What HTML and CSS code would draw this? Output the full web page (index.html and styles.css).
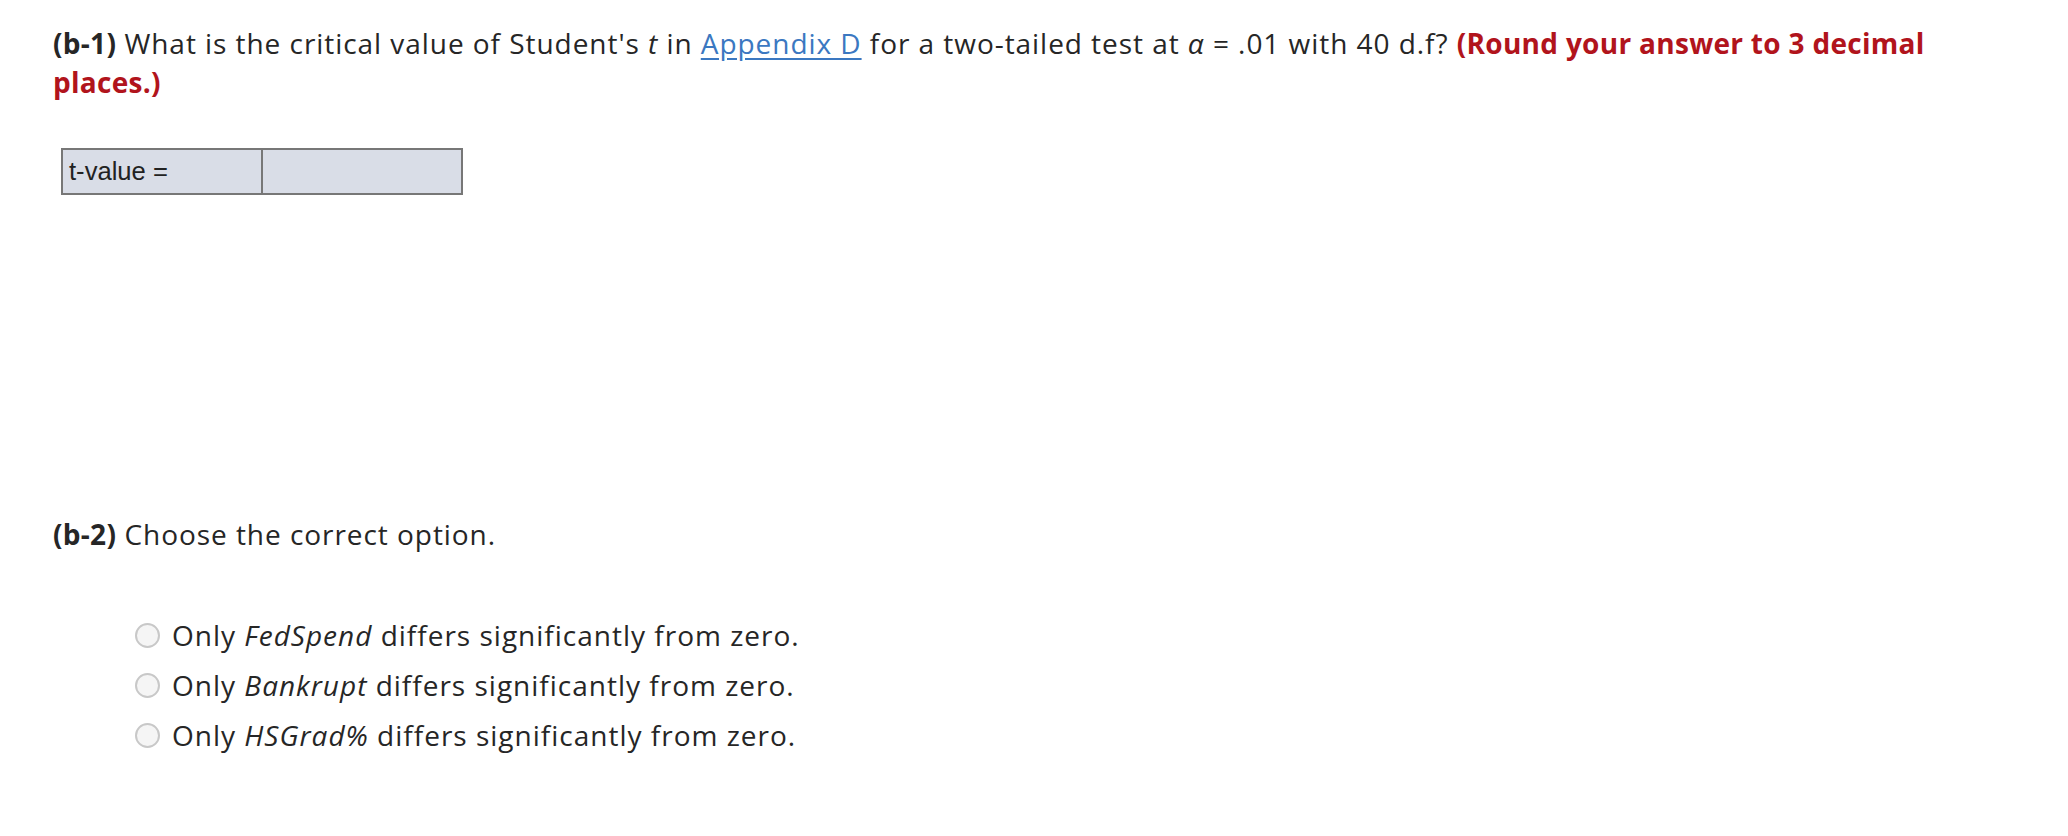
FILE: index.html
```html
<!DOCTYPE html>
<html lang="en">
<head>
<meta charset="utf-8">
<title>Question</title>
<link rel="stylesheet" href="styles.css">
</head>
<body>
<main class="page">
  <p class="question"><strong>(b-1)</strong> What is the critical value of Student's <em>t</em> in <a class="link" href="#">Appendix D</a> for a two-tailed test at <em>α</em> = .01 with 40 d.f? <strong class="hint">(Round your answer to 3 decimal</strong><br><strong class="hint">places.)</strong></p>

  <table class="answer">
    <tr>
      <td class="label">t-value =</td>
      <td class="input"></td>
    </tr>
  </table>

  <p class="question q2"><strong>(b-2)</strong> Choose the correct option.</p>

  <ul class="options">
    <li class="option"><span class="radio"></span><span>Only <em>FedSpend</em> differs significantly from zero.</span></li>
    <li class="option"><span class="radio"></span><span>Only <em>Bankrupt</em> differs significantly from zero.</span></li>
    <li class="option"><span class="radio"></span><span>Only <em>HSGrad%</em> differs significantly from zero.</span></li>
  </ul>
</main>
</body>
</html>
```

FILE: styles.css
```css
html, body {
  margin: 0;
  padding: 0;
  background: #ffffff;
}

.page {
  padding: 24px 0 0 53px;
  width: 1900px;
  font-family: "Open Sans", "Lato", sans-serif;
  color: #262626;
}

.question {
  margin: 0;
  font-size: 28px;
  line-height: 39px;
  letter-spacing: 0.95px;
}

.question strong {
  font-weight: 700;
  letter-spacing: 0.3px;
}

.hint {
  color: #b1141c;
}

.link {
  color: #3b78c1;
  text-decoration: underline;
  text-underline-offset: 4px;
}

.answer {
  margin: 46px 0 0 8px;
  border-collapse: collapse;
  font-family: "Liberation Sans", Arial, sans-serif;
  font-size: 25.6px;
  color: #222;
}

.answer td {
  width: 192px;
  height: 43px;
  padding: 0 0 0 6px;
  border: 2px solid #777777;
  background: #d9dde7;
  line-height: 43px;
}

.q2 {
  margin-top: 320px;
}

.options {
  list-style: none;
  margin: 56px 0 0 82px;
  padding: 0;
  font-size: 28px;
  line-height: 50px;
  letter-spacing: 1px;
}

.option {
  display: flex;
  align-items: center;
  gap: 12px;
}

.radio {
  width: 21px;
  height: 21px;
  border: 2px solid #c8c8c8;
  border-radius: 50%;
  background: #f5f5f5;
  flex: none;
}
```
